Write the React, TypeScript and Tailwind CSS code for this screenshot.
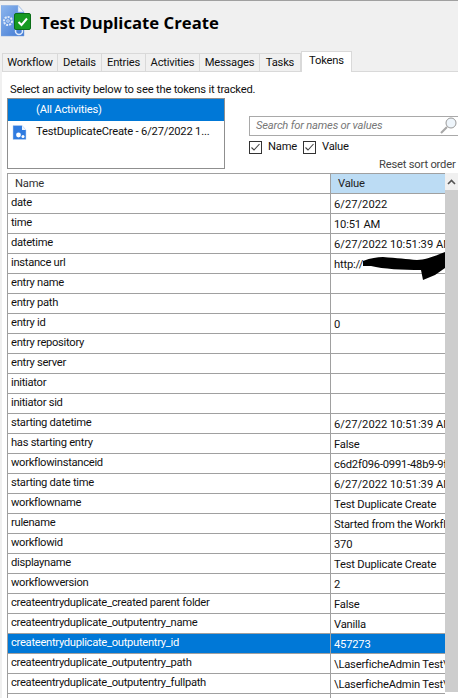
const rows: [string, string][] = [
  ["date", "6/27/2022"],
  ["time", "10:51 AM"],
  ["datetime", "6/27/2022 10:51:39 AM"],
  ["instance url", "http://"],
  ["entry name", ""],
  ["entry path", ""],
  ["entry id", "0"],
  ["entry repository", ""],
  ["entry server", ""],
  ["initiator", ""],
  ["initiator sid", ""],
  ["starting datetime", "6/27/2022 10:51:39 AM"],
  ["has starting entry", "False"],
  ["workflowinstanceid", "c6d2f096-0991-48b9-9f8a"],
  ["starting date time", "6/27/2022 10:51:39 AM"],
  ["workflowname", "Test Duplicate Create"],
  ["rulename", "Started from the Workflow"],
  ["workflowid", "370"],
  ["displayname", "Test Duplicate Create"],
  ["workflowversion", "2"],
  ["createentryduplicate_created parent folder", "False"],
  ["createentryduplicate_outputentry_name", "Vanilla"],
  ["createentryduplicate_outputentry_id", "457273"],
  ["createentryduplicate_outputentry_path", "\\LaserficheAdmin Test\\"],
  ["createentryduplicate_outputentry_fullpath", "\\LaserficheAdmin Test\\"],
  ["", ""],
];

const tabs = ["Workflow", "Details", "Entries", "Activities", "Messages", "Tasks"];
const tabW = ["w-[56px]", "w-[44px]", "w-[44px]", "w-[54px]", "w-[60px]", "w-[41px]"];

function Check() {
  return (
    <span className="flex h-[13px] w-[13px] shrink-0 items-center justify-center border border-[#333] bg-white">
      <svg width="11" height="11" viewBox="0 0 11 11" fill="none" stroke="#444" strokeWidth="1.1">
        <path d="M1.5 5.5 L4 8 L9.5 2" />
      </svg>
    </span>
  );
}

export default function App() {
  return (
    <div className="relative h-[698px] w-[458px] overflow-hidden bg-[#f0f0f0] font-['Roboto',sans-serif] text-[11.2px] tracking-[-0.2px] text-[#111]">
      <div className="h-px bg-[#a0a0a0]" />
      <div className="flex h-[52px] items-start pl-[1px] pt-[4px]">
        <svg width="30" height="32" viewBox="0 0 30 32" className="shrink-0">
          <defs>
            <linearGradient id="doc" x1="0" y1="0" x2="1" y2="1">
              <stop offset="0" stopColor="#8db6ee" />
              <stop offset="1" stopColor="#3f78d2" />
            </linearGradient>
          </defs>
          <path d="M0 0.5 H17 L23 7 V31 H0 Z" fill="url(#doc)" stroke="#7fa6de" strokeWidth="0.5" />
          <path d="M17 0.5 L23 7 H17 Z" fill="#eef4fc" stroke="#9fbce6" strokeWidth="0.5" />
          <circle cx="7" cy="16" r="4" fill="none" stroke="#dfeafa" strokeWidth="2" strokeDasharray="2 1" />
          <circle cx="7" cy="16" r="1.3" fill="none" stroke="#dfeafa" strokeWidth="0.8" />
          <circle cx="18" cy="26" r="3.5" fill="none" stroke="#dfeafa" strokeWidth="1.5" />
          <rect x="13.5" y="8.5" width="16" height="16" rx="1.5" fill="#169a22" stroke="#0b6d18" />
          <path d="M17.5 17 L20.5 20 L26 13.5" fill="none" stroke="#fff" strokeWidth="2" />
        </svg>
        <span className="ml-[9px] mt-[7px] whitespace-nowrap font-['Open_Sans',sans-serif] text-[16.7px] font-bold leading-[22px] tracking-normal text-black">
          Test Duplicate Create
        </span>
      </div>

      <div className="flex h-[18px] items-end pl-[2px]">
        {tabs.map((t, i) => (
          <span
            key={t}
            className={`flex h-[18px] items-center justify-center border-t border-r border-[#d9d9d9] pt-[1px] ${i === 0 ? "border-l" : ""} ${tabW[i]} bg-[#f0f0f0]`}
          >
            {t}
          </span>
        ))}
        <span className="relative z-10 -mb-px flex h-[21px] w-[51px] items-center justify-center border border-b-0 border-[#d9d9d9] bg-white pb-[1px]">
          Tokens
        </span>
      </div>

      <div className="ml-[2px] h-[628px] border-t border-[#d9d9d9] bg-white pl-[5px]">
        <div className="flex h-[101px]">
          <div className="w-[226px] pt-[10px]">
            <div className="whitespace-nowrap pl-[3px] leading-[15px]">
              Select an activity below to see the tokens it tracked.
            </div>
            <div className="mt-[1px] h-[71px] w-[218px] border border-[#8f8f8f] bg-white">
              <div className="flex h-[22px] items-center bg-[#0078d7] pl-[28px] text-white">(All Activities)</div>
              <div className="flex h-[22px] items-center pl-[4px]">
                <svg width="15" height="15" viewBox="0 0 15 15" className="mr-[9px] shrink-0">
                  <path d="M1 0.5 H10 L14 5 V14.5 H1 Z" fill="#2f7be0" stroke="#bcd4f2" strokeWidth="0.5" />
                  <path d="M10 0.5 L14 5 H10 Z" fill="#f2f7fd" />
                  <circle cx="6.5" cy="10" r="2.4" fill="#fff" />
                  <circle cx="11" cy="11.5" r="1.5" fill="#fff" />
                </svg>
                <span className="whitespace-nowrap">TestDuplicateCreate - 6/27/2022 1...</span>
              </div>
            </div>
          </div>
          <div className="flex-1 pl-[16px] pt-[44px]">
            <div className="relative -mr-px flex h-[20px] items-center border border-r-0 border-[#a9a9a9] pl-[6px] pt-[1px]">
              <span className="italic text-[#777]">Search for names or values</span>
              <svg width="20" height="20" viewBox="0 0 20 20" fill="none" className="absolute right-0 top-[-1px]">
                <circle cx="12" cy="7" r="5" fill="#eef5fb" stroke="#9a9a9a" />
                <path d="M8 11 L2 17" stroke="#a8a8a8" strokeWidth="2.2" />
              </svg>
            </div>
            <div className="mt-[4px] flex h-[15px] items-center">
              <Check />
              <span className="ml-[6px] mr-[8px] w-[27px]">Name</span>
              <Check />
              <span className="ml-[6px]">Value</span>
            </div>
            <div className="mt-[3px] whitespace-nowrap pl-[130px] leading-[14px] text-[#444]">Reset sort order</div>
          </div>
        </div>

        <div className="flex">
          <div className="h-[600px] w-[438px] overflow-hidden border-l border-t border-[#a0a0a0]">
            <div className="flex h-[20px] border-b border-[#a0a0a0]">
              <div className="flex w-[323px] items-center border-r border-[#a0a0a0] pl-[7px] pt-[2px] text-[#333]">Name</div>
              <div className="flex flex-1 items-center bg-[#bcdcf4] pl-[7px] pt-[2px] text-[#222]">Value</div>
            </div>
            {rows.map(([n, v]) => {
              const sel = n.endsWith("_id");
              const isDate = /\d\/\d/.test(v);
              return (
                <div
                  key={n + v}
                  className={`flex h-[20px] border-b border-[#a0a0a0] ${sel ? "bg-[#0078d7] text-white" : ""}`}
                >
                  <div className="flex w-[323px] items-start overflow-hidden whitespace-nowrap border-r border-[#a0a0a0] pl-[3px] pt-[1px] leading-[15px] tracking-[-0.29px]">
                    {n}
                  </div>
                  <div className={`flex-1 overflow-hidden whitespace-nowrap pl-[3px] pt-[3px] leading-[15px] ${isDate ? "tracking-normal" : ""}`}>{v}</div>
                </div>
              );
            })}
          </div>
          <div className="flex h-[519px] w-[13px] flex-col bg-[#cdcdcd]">
            <div className="flex h-[17px] items-center justify-center bg-[#f0f0f0]">
              <svg width="9" height="6" viewBox="0 0 9 6" fill="none" stroke="#555" strokeWidth="1.6">
                <path d="M1 5 L4.5 1.5 L8 5" />
              </svg>
            </div>
          </div>
        </div>
      </div>

      <svg className="absolute left-[363px] top-[252px]" width="82" height="29" viewBox="0 0 82 29">
        <path
          d="M0 9 C8 6 14 5 20 5 C34 6 44 7 54 8 C62 8 72 4 82 0 L82 16 L72 23 L60 28 L58 18 C40 18 20 17 8 14 L0 14 Z"
          fill="#000"
        />
      </svg>
    </div>
  );
}
